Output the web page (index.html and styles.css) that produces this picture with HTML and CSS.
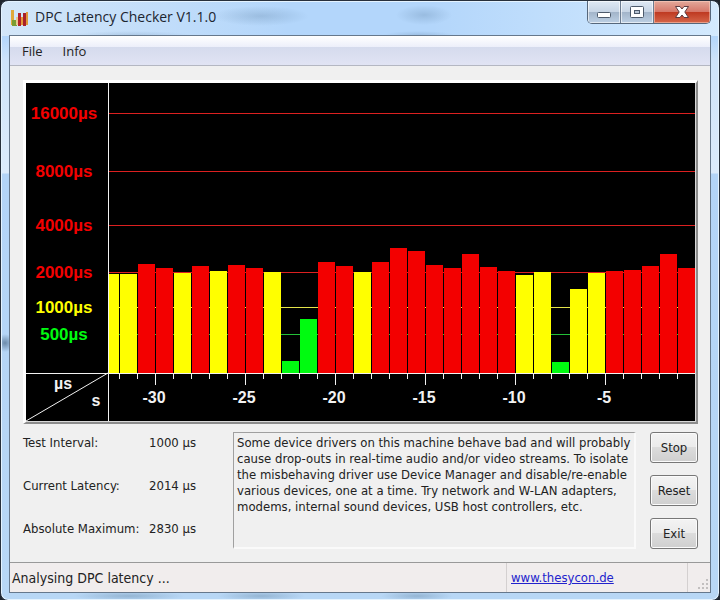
FILE: index.html
```html
<!DOCTYPE html>
<html lang="en">
<head>
    <meta charset="UTF-8">
    <meta name="viewport" content="width=device-width, initial-scale=1.0">
    <title>DPC Latency Checker V1.1.0</title>
    <link rel="stylesheet" href="styles.css">
</head>
<body>
    <div class="window">
        <header class="titlebar">
            <svg class="app-icon" width="18" height="18" viewBox="0 0 18 18" aria-hidden="true">
                <rect x="0" y="1" width="3" height="15" fill="#e0a93a"/>
                <rect x="1" y="11" width="5" height="6" fill="#7a9c34"/>
                <rect x="5" y="8" width="2" height="8" fill="#e8c890"/>
                <rect x="7" y="4" width="3" height="13" fill="#b3222a"/>
                <rect x="10" y="8" width="2" height="8" fill="#e39a3a"/>
                <rect x="12" y="4" width="3" height="13" fill="#a8202a"/>
                <rect x="15" y="3" width="2" height="13" fill="#e0983a"/>
            </svg>
            <h1 class="title">DPC Latency Checker V1.1.0</h1>
            <div class="window-buttons">
                <button type="button" class="win-btn win-min" aria-label="Minimize">
                    <svg width="16" height="16" viewBox="0 0 16 16">
                        <rect x="1.5" y="8.5" width="13" height="5" rx="1" fill="#fff" stroke="#4d5a6b"/>
                    </svg>
                </button>
                <button type="button" class="win-btn win-max" aria-label="Maximize">
                    <svg width="16" height="16" viewBox="0 0 16 16">
                        <rect x="1.5" y="2.5" width="13" height="11" rx="1" fill="#fff" stroke="#4d5a6b"/>
                        <rect x="5.5" y="6.5" width="5" height="3" fill="#b8c4d4" stroke="#4d5a6b"/>
                    </svg>
                </button>
                <button type="button" class="win-btn win-close" aria-label="Close">
                    <svg width="16" height="16" viewBox="0 0 16 16">
                        <path d="M1.500 2.500h4.500L8 5l2-2.500h4.500L10.800 8l3.700 5.500H10L8 11l-2 2.500H1.500L5.200 8z" fill="#fff" stroke="#5c3b40"/>
                    </svg>
                </button>
            </div>
        </header>

        <div class="client">
            <nav class="menubar">
                <button type="button" class="menu-item">File</button>
                <button type="button" class="menu-item">Info</button>
            </nav>

            <main class="content">
                <div class="chart-frame">
                    <svg class="chart" id="chart" viewBox="0 0 669 338" role="img" aria-label="DPC latency"></svg>
                </div>

                <div class="details">
                    <dl class="stats">
                        <div class="stat"><dt>Test Interval:</dt><dd>1000 µs</dd></div>
                        <div class="stat"><dt>Current Latency:</dt><dd>2014 µs</dd></div>
                        <div class="stat"><dt>Absolute Maximum:</dt><dd>2830 µs</dd></div>
                    </dl>
                    <textarea class="message" aria-label="Analysis" readonly>Some device drivers on this machine behave bad and will probably cause drop-outs in real-time audio and/or video streams. To isolate the misbehaving driver use Device Manager and disable/re-enable various devices, one at a time. Try network and W-LAN adapters, modems, internal sound devices, USB host controllers, etc.</textarea>
                    <div class="actions">
                        <button type="button" class="btn">Stop</button>
                        <button type="button" class="btn">Reset</button>
                        <button type="button" class="btn">Exit</button>
                    </div>
                </div>
            </main>

            <footer class="statusbar">
                <span class="status-text">Analysing DPC latency ...</span>
                <span class="status-link"><a href="http://www.thesycon.de">www.thesycon.de</a></span>
                <span class="status-grip">
                    <svg width="12" height="12" viewBox="0 0 12 12" aria-hidden="true">
                        <path d="M9 1h2v2h-2zM9 5h2v2h-2zM9 9h2v2h-2zM5 5h2v2h-2zM5 9h2v2h-2zM1 9h2v2h-2z" fill="#c2bfbf"/>
                    </svg>
                </span>
            </footer>
        </div>
    </div>

    <script>
        const chart = document.getElementById('chart');
        const AXIS_X = 82;
        const AXIS_Y = 290;
        const WIDTH = 669;
        const HEIGHT = 338;
        const STEP = 18;

        const levels = [
            { label: '16000µs', y: 30, type: 'red' },
            { label: '8000µs', y: 88, type: 'red' },
            { label: '4000µs', y: 142, type: 'red' },
            { label: '2000µs', y: 189, type: 'red' },
            { label: '1000µs', y: 224, type: 'yellow' },
            { label: '500µs', y: 251, type: 'green' }
        ];

        // One bar per second, oldest first: [colour, bar height]
        const bars = [
            ['yellow', 99], ['yellow', 99], ['red', 109], ['red', 105], ['yellow', 100],
            ['red', 107], ['yellow', 102], ['red', 108], ['red', 105], ['yellow', 101],
            ['green', 12], ['green', 54], ['red', 111], ['red', 107], ['yellow', 101],
            ['red', 111], ['red', 125], ['red', 122], ['red', 108], ['red', 105],
            ['red', 119], ['red', 106], ['red', 102], ['yellow', 98], ['yellow', 101],
            ['green', 11], ['yellow', 84], ['yellow', 100], ['red', 102], ['red', 103],
            ['red', 107], ['red', 119], ['red', 105]
        ];

        function draw(tag, attrs, text) {
            const el = document.createElementNS('http://www.w3.org/2000/svg', tag);
            for (const key in attrs) {
                el.setAttribute(key, attrs[key]);
            }
            if (text) {
                el.textContent = text;
            }
            chart.appendChild(el);
        }

        // Threshold lines and their labels
        levels.forEach(level => {
            draw('rect', { x: AXIS_X, y: level.y, width: WIDTH - AXIS_X, height: 1, class: 'line-' + level.type });
            draw('text', { x: 38, y: level.y + 6, class: 'level-label fill-' + level.type }, level.label);
        });

        // Bars and ticks, the oldest bar is cut off by the axis
        bars.forEach((bar, i) => {
            const tick = 75 + i * STEP;
            const left = Math.max(tick + 1, AXIS_X + 1);
            draw('rect', { x: left, y: AXIS_Y - bar[1], width: tick + STEP - left, height: bar[1], class: 'fill-' + bar[0] });
            if (i === 0) {
                return;
            }
            const second = i - 33;
            const major = second % 5 === 0;
            draw('rect', { x: tick, y: AXIS_Y, width: 1, height: major ? 12 : 6, class: 'axis' });
            if (major) {
                draw('text', { x: tick - 1, y: 320, class: 'second-label' }, String(second));
            }
        });

        draw('rect', { x: AXIS_X, y: 0, width: 1, height: HEIGHT, class: 'axis' });
        draw('rect', { x: 0, y: AXIS_Y, width: WIDTH, height: 1, class: 'axis' });
        draw('line', { x1: 0, y1: HEIGHT, x2: AXIS_X, y2: AXIS_Y, class: 'diagonal' });
        draw('text', { x: 37, y: 306, class: 'second-label' }, 'µs');
        draw('text', { x: 70, y: 323, class: 'second-label' }, 's');
    </script>
</body>
</html>
```

FILE: styles.css
```css
* {
    margin: 0;
    padding: 0;
    box-sizing: border-box;
}

body {
    font-family: 'DejaVu Sans Condensed', 'DejaVu Sans', sans-serif;
    font-size: 13px;
    color: #222;
    background: #20262e;
}

button,
textarea {
    font: inherit;
    color: inherit;
}

.window {
    display: flex;
    flex-direction: column;
    min-height: 100vh;
    padding: 0 8px 7px;
    border: 1px solid #27303c;
    border-radius: 8px;
    box-shadow: inset 0 0 0 1px #e4f3ff;
    background:
        radial-gradient(ellipse 48px 10px at 260px 15px, rgba(105, 140, 175, 0.35), transparent),
        radial-gradient(ellipse 28px 10px at 423px 14px, rgba(105, 140, 175, 0.35), transparent),
        radial-gradient(ellipse 36px 4px at 418px 34px, rgba(105, 140, 175, 0.3), transparent),
        radial-gradient(ellipse 60px 4px at 130px 34px, rgba(105, 140, 175, 0.25), transparent),
        radial-gradient(ellipse 9px 9px at 4px 342px, rgba(60, 90, 120, 0.6), transparent),
        radial-gradient(ellipse 56px 5px at 128px 595px, rgba(95, 130, 160, 0.4), transparent),
        radial-gradient(ellipse 44px 5px at 260px 595px, rgba(95, 130, 160, 0.4), transparent),
        radial-gradient(ellipse 36px 5px at 416px 595px, rgba(95, 130, 160, 0.4), transparent),
        linear-gradient(90deg, rgba(215, 232, 248, 0.9), transparent 40%, transparent 60%, rgba(215, 236, 254, 0.9)) 0 0 / 100% 35px no-repeat,
        linear-gradient(#b3d6fb 35px, #cfe4fa 60px, #dcebfb 172px, #b3d4f7 173px, #b8d7f5);
}

/* Title bar */
.titlebar {
    display: flex;
    align-items: flex-start;
    height: 34px;
}

.app-icon {
    margin: 8px 6px 0 2px;
}

.title {
    flex: 1;
    padding-top: 6px;
    font-family: 'Open Sans', sans-serif;
    font-size: 14px;
    font-weight: 400;
    line-height: 20px;
    color: #1c2530;
}

.window-buttons {
    display: flex;
    height: 23px;
    border: 1px solid #56677b;
    border-top: none;
    border-radius: 0 0 5px 5px;
    overflow: hidden;
}

.win-btn {
    display: flex;
    align-items: center;
    justify-content: center;
    width: 33px;
    border: none;
    border-right: 1px solid #6c7c90;
    background: linear-gradient(#dfe9f4, #c7d5e5 48%, #a3b5ca 52%, #bdd0e4);
    box-shadow: inset 0 0 0 1px rgba(255, 255, 255, 0.6);
}

.win-close {
    width: 56px;
    border-right: none;
    background: linear-gradient(#e3a99b, #d6786a 48%, #bf3a22 52%, #d5664a);
    box-shadow: inset 0 0 0 1px rgba(255, 215, 200, 0.5);
}

/* Client area */
.client {
    display: flex;
    flex: 1;
    flex-direction: column;
    border: 1px solid #66788c;
    background: #f0f0f0;
}

.menubar {
    display: flex;
    height: 30px;
    padding-left: 2px;
    border-bottom: 1px solid #b4b7c2;
    background: linear-gradient(#fff, #eceffa 38%, #d5dbed 39%, #e1e4f4);
}

.menu-item {
    padding: 0 10px;
    border: none;
    background: none;
    font-family: 'Open Sans', sans-serif;
    font-size: 13px;
}

.content {
    flex: 1;
    padding: 14px 12px 13px 13px;
}

.chart-frame {
    padding: 0 1px 1px 0;
    border: 3px solid #fff;
    border-right: 2px solid #8c8c8c;
    border-bottom: 2px solid #8c8c8c;
    background: #d8d8d8;
}

.chart {
    display: block;
    width: 100%;
    height: auto;
    background: #000;
    font-family: 'Liberation Sans', Arial, sans-serif;
    font-weight: 700;
    shape-rendering: crispEdges;
}

.level-label {
    font-size: 17px;
    text-anchor: middle;
}

.second-label {
    font-size: 16px;
    text-anchor: middle;
    fill: #f2f2f2;
}

.axis {
    fill: #f2f2f2;
}

.diagonal {
    stroke: #f2f2f2;
    shape-rendering: auto;
}

.fill-red {
    fill: #f30000;
}

.fill-yellow {
    fill: #ff0;
}

.fill-green {
    fill: #00fb10;
}

.line-red {
    fill: #dc2020;
}

.line-yellow {
    fill: #e4e44a;
}

.line-green {
    fill: #24c038;
}

/* Details under the chart */
.details {
    display: flex;
    margin-top: 8px;
}

.stats {
    display: flex;
    flex-direction: column;
    justify-content: space-between;
    width: 210px;
    padding: 3px 0 12px;
}

.stat {
    display: flex;
    line-height: 16px;
}

.stat dt {
    width: 126px;
}

.message {
    flex: 1;
    height: 117px;
    padding: 2px 3px;
    border: 1px solid #a0a0a0;
    border-right: 2px solid #fafafa;
    border-bottom: 2px solid #fafafa;
    background: #f0f0f0;
    line-height: 16px;
    resize: none;
    outline: none;
    overflow: hidden;
}

.actions {
    display: flex;
    flex-direction: column;
    justify-content: space-between;
    width: 48px;
    margin-left: 14px;
}

.btn {
    height: 31px;
    border: 1px solid #777;
    border-radius: 3px;
    background: linear-gradient(#f3f3f3, #ebebeb 49%, #dcdcdc 50%, #cfcfcf);
    box-shadow: inset 0 0 0 1px #fbfbfb;
}

/* Status bar */
.statusbar {
    display: flex;
    height: 30px;
    border-top: 1px solid #999;
    background: #f1eded;
    font-size: 14px;
    line-height: 30px;
}

.status-text {
    flex: 1;
    padding-left: 2px;
}

.status-link {
    width: 181px;
    padding-left: 4px;
    border-left: 1px solid #d4d0d0;
    font-size: 13px;
}

.status-link a {
    color: #2222cc;
}

.status-grip {
    display: flex;
    align-items: flex-end;
    justify-content: flex-end;
    width: 23px;
    padding: 0 1px 2px 0;
    border-left: 1px solid #d4d0d0;
}
```
